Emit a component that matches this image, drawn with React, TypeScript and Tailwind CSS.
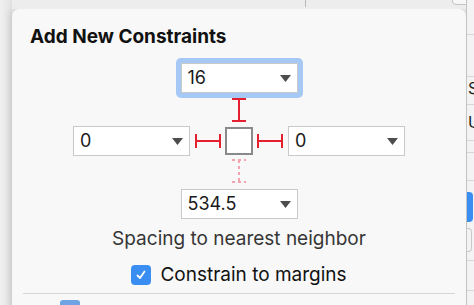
import React from "react";

const font = { fontFamily: "Inter, 'Liberation Sans', sans-serif" };

function Arrow() {
  return (
    <svg width="11" height="7" viewBox="0 0 11 7" className="shrink-0">
      <polygon points="0,0 11,0 5.5,7" fill="#4d4d4d" />
    </svg>
  );
}

function Dropdown({ value, className = "" }: { value: string; className?: string }) {
  return (
    <div
      className={`flex h-[30px] w-[117px] items-center justify-between border border-[#c9c9c9] bg-white pl-[6px] pr-[6px] text-[18px] text-[#1a1a1a] ${className}`}
    >
      <span className="leading-none">{value}</span>
      <Arrow />
    </div>
  );
}

function VBeam({ dashed = false }: { dashed?: boolean }) {
  const c = dashed ? "#f3a3ad" : "#e4202e";
  const d = dashed ? "3 3" : undefined;
  return (
    <svg width="16" height="24" viewBox="0 0 16 24" className="block">
      <line x1="1" y1="1" x2="15" y2="1" stroke={c} strokeWidth="2" strokeDasharray={d} />
      <line x1="8" y1="1" x2="8" y2="23" stroke={c} strokeWidth="2" strokeDasharray={d} />
      <line x1="1" y1="23" x2="15" y2="23" stroke={c} strokeWidth="2" strokeDasharray={d} />
    </svg>
  );
}

function HBeam() {
  const c = "#e4202e";
  return (
    <svg width="26" height="16" viewBox="0 0 26 16" className="block">
      <line x1="1" y1="1" x2="1" y2="15" stroke={c} strokeWidth="2" />
      <line x1="1" y1="8" x2="25" y2="8" stroke={c} strokeWidth="2" />
      <line x1="25" y1="1" x2="25" y2="15" stroke={c} strokeWidth="2" />
    </svg>
  );
}

export default function App() {
  return (
    <div className="relative flex h-[305px] w-[474px] overflow-hidden bg-[#ececec]" style={font}>
      {/* left gutter */}
      <div className="w-[12px] shrink-0 bg-gradient-to-r from-[#f0f0f0] to-[#e2e2e2]" />
      {/* middle column */}
      <div className="flex w-[454px] shrink-0 flex-col">
        <div className="relative h-[9px] shrink-0 bg-[#ededed]">
          <div className="absolute left-[293px] top-0 h-[7px] w-px bg-[#b9b9b9]" />
          <div className="absolute left-[440px] top-[-6px] h-[11px] w-[20px] rounded-[4px] border border-[#c4c4c4] bg-[#f7f7f7]" />
        </div>
        <div className="flex flex-1 flex-col items-center rounded-t-[7px] bg-[#f8f8f8] shadow-[0_0_8px_rgba(0,0,0,0.18)]">
          <div className="w-full pl-[18px] pt-[18px] text-[19px] font-bold leading-[20px] text-[#111]">
            Add New Constraints
          </div>
          <div className="mt-[11px] rounded-[5px] bg-[#a5c8f5] p-[5px]">
            <Dropdown value="16" className="border-[#8db1e4]" />
          </div>
          <VBeam />
          <div className="mt-[4px] flex h-[30px] items-center">
            <Dropdown value="0" />
            <div className="ml-[5px]">
              <HBeam />
            </div>
            <div className="ml-[4px] h-[28px] w-[28px] border-2 border-[#8a8a8a] bg-white" />
            <div className="ml-[4px]">
              <HBeam />
            </div>
            <Dropdown value="0" className="ml-[5px]" />
          </div>
          <div className="mt-[3px]">
            <VBeam dashed />
          </div>
          <Dropdown value="534.5" className="mt-[6px]" />
          <div className="mt-[10px] text-[19px] leading-[20px] text-[#363636]">Spacing to nearest neighbor</div>
          <div className="mt-[16px] flex h-[20px] items-center">
            <div className="flex h-[20px] w-[20px] items-center justify-center rounded-[4px] bg-[#3a8ef2]">
              <svg width="12" height="12" viewBox="0 0 12 12">
                <path d="M2.5 6.5 L5 9 L9.5 2.5" fill="none" stroke="white" strokeWidth="1.8" strokeLinecap="round" strokeLinejoin="round" />
              </svg>
            </div>
            <span className="ml-[9px] text-[19px] leading-[20px] text-[#111]">Constrain to margins</span>
          </div>
          <div className="mt-[8px] h-px w-[432px] bg-[#d6d6d6]" />
          <div className="mt-[6px] ml-[48px] h-[10px] w-[20px] self-start rounded-[3px] bg-[#6fa3e3]" />
        </div>
      </div>
      {/* right strip */}
      <div className="relative w-[8px] shrink-0 border-l border-[#c3c3c3] bg-[#f3f3f3]">
        <div className="absolute left-0 top-[34px] h-px w-full bg-[#d6d6d6]" />
        <div className="absolute left-0 top-[76px] h-px w-full bg-[#d6d6d6]" />
        <div className="absolute left-[1px] top-[78px] text-[16px] leading-[20px] text-[#222]">S</div>
        <div className="absolute left-0 top-[104px] h-px w-full bg-[#d6d6d6]" />
        <div className="absolute left-[1px] top-[112px] text-[16px] leading-[20px] text-[#222]">U</div>
        <div className="absolute left-0 top-[140px] h-px w-full bg-[#d6d6d6]" />
        <div className="absolute left-0 top-[152px] h-px w-full bg-[#d6d6d6]" />
        <div className="absolute left-0 top-[180px] h-px w-full bg-[#d6d6d6]" />
        <div className="absolute left-0 top-[192px] h-[30px] w-[6px] rounded-r-[4px] bg-[#3a8ef2]" />
        <div className="absolute left-0 top-[228px] h-[24px] w-[5px] rounded-r-[4px] border border-l-0 border-[#c8c8c8]" />
        <div className="absolute left-0 top-[260px] h-px w-full bg-[#d6d6d6]" />
        <div className="absolute left-0 top-[290px] h-px w-full bg-[#d6d6d6]" />
      </div>
    </div>
  );
}
